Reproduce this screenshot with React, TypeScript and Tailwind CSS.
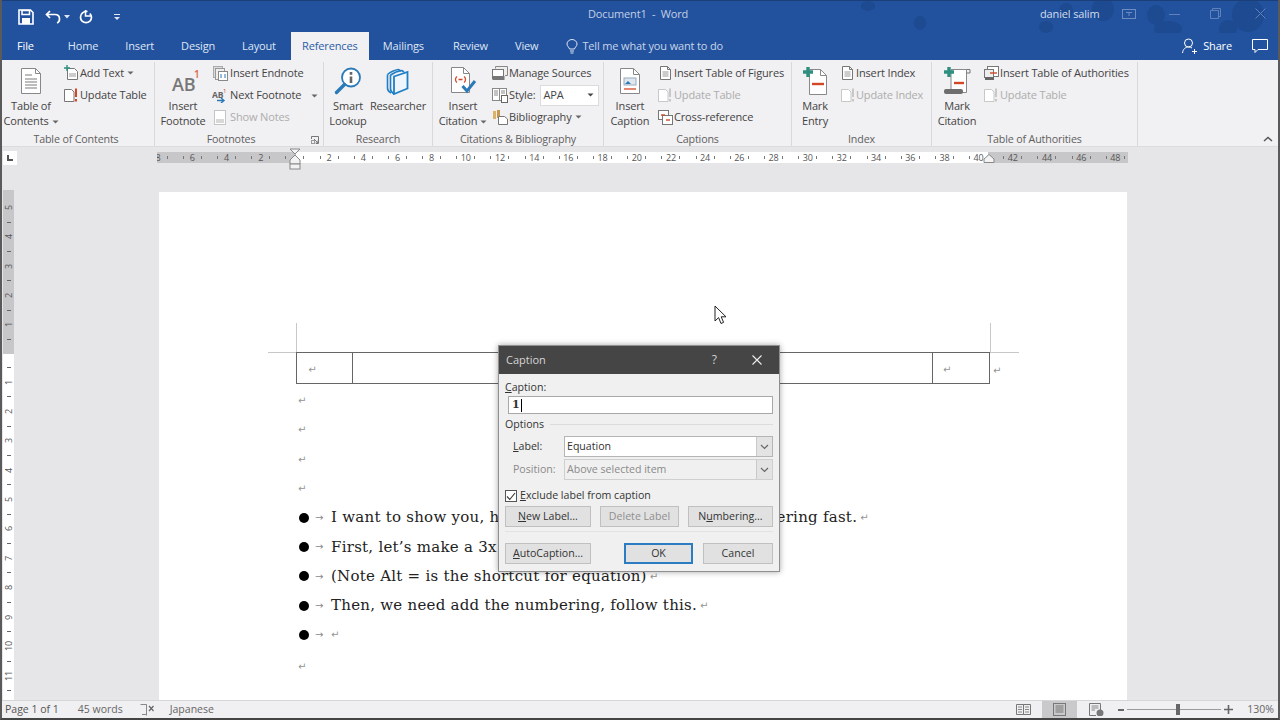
import React from "react";

const UI = "font-['Open_Sans','Noto_Sans',sans-serif]";

function Caret({ c = "#666" }: { c?: string }) {
  return (
    <svg width="7" height="4" viewBox="0 0 7 4" className="inline-block align-middle ml-[3px]">
      <path d="M0.5 0.5H6.5L3.5 3.5Z" fill={c} />
    </svg>
  );
}

const Doc = ({ d = false }: { d?: boolean }) => {
  const s = d ? "#c4c4c4" : "#777";
  return (
    <svg width="15" height="16" viewBox="0 0 15 16">
      <path d="M2.5 1.5H9.5L12.5 4.5V14.5H2.5Z" fill="#fff" stroke={s} />
      <path d="M9.5 1.5V4.5H12.5" fill="none" stroke={s} />
      {!d && <path d="M4.5 7H10.5M4.5 9H10.5M4.5 11H10.5" stroke="#999" />}
    </svg>
  );
};

const UpdateIcon = ({ d = false }: { d?: boolean }) => {
  const s = d ? "#c8c8c8" : "#777";
  return (
    <svg width="16" height="16" viewBox="0 0 16 16">
      <path d="M1.5 2.5H8.5L11 5V14.5H1.5Z" fill="#fff" stroke={s} />
      <path d="M13 1.5V10M13 12V14.5" stroke={d ? "#c8c8c8" : "#d24726"} strokeWidth="2" />
    </svg>
  );
};

const Small = ({
  icon,
  text,
  w = 18,
  d = false,
  after,
}: {
  icon: React.ReactNode;
  text: string;
  w?: number;
  d?: boolean;
  after?: React.ReactNode;
}) => (
  <div className={`flex h-[22px] items-center whitespace-nowrap ${d ? "text-[#adadad]" : "text-[#444]"}`}>
    <span className="flex shrink-0 items-center justify-center" style={{ width: w }}>
      {icon}
    </span>
    <span>{text}</span>
    {after}
  </div>
);

const Large = ({
  icon,
  lines,
  w,
  caret = false,
}: {
  icon: React.ReactNode;
  lines: string[];
  w: number;
  caret?: boolean;
}) => (
  <div className="flex shrink-0 flex-col items-center text-center" style={{ width: w }}>
    <div className="flex h-[37px] items-center justify-center">{icon}</div>
    <div className="whitespace-nowrap leading-[14.5px] text-[#444]">
      {lines.map((l, i) => (
        <div key={i}>
          {l}
          {caret && i === lines.length - 1 && <Caret />}
        </div>
      ))}
    </div>
  </div>
);

const Group = ({
  w,
  label,
  children,
  launcher = false,
  labelPad = 0,
}: {
  w: number;
  label: string;
  children: React.ReactNode;
  launcher?: boolean;
  labelPad?: number;
}) => (
  <div className="relative flex h-[84px] shrink-0 flex-col border-r border-[#d9d8da]" style={{ width: w }}>
    <div className="flex h-[70px] shrink-0">{children}</div>
    <div className="text-center text-[10.7px] leading-[14px] text-[#5f5f5f]" style={{ paddingRight: labelPad }}>
      {label}
    </div>
    {launcher && (
      <svg width="8" height="8" viewBox="0 0 8 8" className="absolute bottom-[2px] right-[4px]">
        <path d="M0.5 3V0.5H7.5V7.5H5M3 3L7 7M7 4.5V7H4.5" fill="none" stroke="#777" />
        <rect x="0.5" y="4.5" width="3" height="3" fill="none" stroke="#999" />
      </svg>
    )}
  </div>
);

const TocIcon = () => (
  <svg width="22" height="28" viewBox="0 0 22 28">
    <path d="M1.5 1.5H15.5L20.5 6.5V26.5H1.5Z" fill="#fff" stroke="#888" />
    <path d="M15.5 1.5V6.5H20.5" fill="none" stroke="#888" />
    <path d="M5 8H12M5 12H17M5 15H17M5 18H17M5 21H17" stroke="#7d7d7d" strokeWidth="1.2" />
  </svg>
);

const FootnoteIcon = () => (
  <svg width="34" height="28" viewBox="0 0 34 28">
    <text x="6" y="24" fontFamily="'Open Sans',sans-serif" fontSize="18" fontWeight="600" fill="#777">
      AB
    </text>
    <text x="28" y="11" fontFamily="'Open Sans',sans-serif" fontSize="10" fontWeight="600" fill="#d9694a">
      1
    </text>
  </svg>
);

const LookupIcon = () => (
  <svg width="28" height="28" viewBox="0 0 28 28">
    <circle cx="17" cy="10.5" r="9" fill="#fff" stroke="#2a79b8" strokeWidth="1.8" />
    <path d="M10.5 17.5L2.5 25.5" stroke="#2a79b8" strokeWidth="3.4" strokeLinecap="round" />
    <rect x="15.7" y="9.5" width="2.6" height="6.5" fill="#666" />
    <rect x="15.7" y="5" width="2.6" height="2.8" fill="#666" />
  </svg>
);

const ResearcherIcon = () => (
  <svg width="24" height="28" viewBox="0 0 24 28">
    <path d="M1.5 7.5C5 4.5 9 3 12.5 2.5L15 4" fill="none" stroke="#1f7fc4" strokeWidth="1.6" />
    <path d="M4.5 8C8 5.5 12 4 16 3.5L18 5" fill="none" stroke="#1f7fc4" strokeWidth="1.6" />
    <path d="M1.5 7.5V21C1.5 23 3 25 5 26" fill="none" stroke="#1f7fc4" strokeWidth="1.6" />
    <path d="M4.5 8V22C4.5 24 6 25.5 8 27" fill="none" stroke="#1f7fc4" strokeWidth="1.6" />
    <path d="M8 9.5L21.5 5V21.5L8 27Z" fill="#eef6fc" stroke="#1f7fc4" strokeWidth="1.8" />
  </svg>
);

const CitationIcon = () => (
  <svg width="28" height="30" viewBox="0 0 28 30">
    <path d="M2.5 1.5H14.5L20.5 7.5V26.5H2.5Z" fill="#fff" stroke="#888" />
    <path d="M14.5 1.5V7.5H20.5" fill="none" stroke="#888" />
    <path d="M8 10.5C6 12 6 15 8 16.5M15 10.5C17 12 17 15 15 16.5M9.5 13.5H13.5" fill="none" stroke="#d24726" strokeWidth="1.3" />
    <path d="M13.5 20L18 25L26 15" fill="none" stroke="#2a79b8" strokeWidth="3" />
  </svg>
);

const CaptionIcon = () => (
  <svg width="22" height="28" viewBox="0 0 22 28">
    <path d="M1.5 1.5H14.5L20.5 7.5V26.5H1.5Z" fill="#fff" stroke="#888" />
    <path d="M14.5 1.5V7.5H20.5" fill="none" stroke="#888" />
    <rect x="5" y="11" width="12" height="7" fill="#dfe7f0" stroke="#9aa9ba" />
    <path d="M6 17L9 14L12 17" fill="#2a79b8" />
    <path d="M5 22H17" stroke="#d24726" strokeWidth="1.3" />
  </svg>
);

const MarkEntryIcon = () => (
  <svg width="28" height="30" viewBox="0 0 28 30">
    <path d="M8.5 3.5H19.5L25.5 9.5V28.5H8.5Z" fill="#fff" stroke="#888" />
    <path d="M19.5 3.5V9.5H25.5" fill="none" stroke="#888" />
    <path d="M7 1V11M2 6H12" stroke="#2f8f7f" strokeWidth="3.4" />
    <path d="M11 18H23" stroke="#d24726" strokeWidth="2.4" />
  </svg>
);

const MarkCitationIcon = () => (
  <svg width="30" height="30" viewBox="0 0 30 30">
    <path d="M9 3.5H24.5V26.5H9Z" fill="#fff" stroke="#888" />
    <path d="M24.5 3.5H28V7H24.5" fill="none" stroke="#777" />
    <rect x="2" y="23" width="19" height="5" rx="2" fill="#6e6e6e" />
    <path d="M7 1V11M2 6H12" stroke="#2f8f7f" strokeWidth="3.4" />
    <path d="M12 17H22" stroke="#d24726" strokeWidth="2.4" />
  </svg>
);

const Stack = () => (
  <svg width="15" height="16" viewBox="0 0 15 16">
    <rect x="0.5" y="1.5" width="9" height="11" fill="#ddd" stroke="#aaa" />
    <rect x="2.5" y="3.5" width="9" height="11" fill="#eee" stroke="#999" />
    <rect x="5.5" y="6.5" width="9" height="9" fill="#fff" stroke="#888" />
    <path d="M8 9V13M12 9V13" stroke="#2a79b8" />
  </svg>
);

function Ret({ className = "" }: { className?: string }) {
  return <span className={`font-['DejaVu_Sans',sans-serif] text-[10px] text-[#949494] ${className}`}>↵</span>;
}

const Bullet = ({ children }: { children?: React.ReactNode }) => (
  <div className="flex h-[29.3px] items-center whitespace-nowrap">
    <span className="ml-[3px] h-[10px] w-[10px] shrink-0 rounded-full bg-black" />
    <span className="ml-[6px] w-[16px] shrink-0 font-['DejaVu_Sans',sans-serif] text-[10px] text-[#8a8a8a]">→</span>
    <span className="flex items-center">{children}</span>
  </div>
);

const Mark = ({ className = "" }: { className?: string }) => (
  <div className={`flex h-[29.3px] items-center pl-[2px] ${className}`}>
    <Ret />
  </div>
);

const hNums = [8, 6, 4, 2, 0, 2, 4, 6, 8, 10, 12, 14, 16, 18, 20, 22, 24, 26, 28, 30, 32, 34, 36, 38, 40, 42, 44, 46, 48];

const vTop = ["5", "", "4", "", "3", "", "2", "", "1", ""];
const vBottom = ["", "1", "", "2", "", "3", "", "4", "", "5", "", "6", "", "7", "", "8", "", "9", "", "10", "", "11", ""];

const VCell = ({ v }: { v: string }) => (
  <div className="flex h-[14.7px] shrink-0 items-center justify-center">
    {v ? (
      <span className="[writing-mode:vertical-rl] rotate-180 text-[9px] leading-[9px] text-[#555]">{v}</span>
    ) : (
      <span className="h-px w-[4px] bg-[#666]" />
    )}
  </div>
);

const Btn = ({
  children,
  w,
  d = false,
  primary = false,
}: {
  children: React.ReactNode;
  w: number;
  d?: boolean;
  primary?: boolean;
}) => (
  <div
    className={`flex h-[21px] items-center justify-center whitespace-nowrap bg-[#e1e1e1] ${
      primary ? "border-2 border-[#2b7cc0]" : "border border-[#c0c0c0]"
    } ${d ? "text-[#8f8f8f]" : "text-[#333]"}`}
    style={{ width: w }}
  >
    {children}
  </div>
);

const Select = ({ text, d = false }: { text: string; d?: boolean }) => (
  <div className={`flex h-[21px] w-[209px] border ${d ? "border-[#cfcfcf] bg-[#f0f0f0] text-[#8a8a8a]" : "border-[#b5b5b5] bg-white text-[#333]"}`}>
    <div className="flex flex-1 items-center pl-[2px]">{text}</div>
    <div className="flex w-[16px] items-center justify-center border-l border-[#c9c9c9] bg-[#e3e3e3]">
      <svg width="9" height="6" viewBox="0 0 9 6">
        <path d="M1 1L4.5 4.5L8 1" fill="none" stroke="#666" strokeWidth="1.2" />
      </svg>
    </div>
  </div>
);

export default function App() {
  return (
    <div className={`relative flex h-[720px] w-[1280px] flex-col overflow-hidden border-x-2 border-b-2 border-x-[#5a5a5a] border-b-[#444] bg-[#e6e5e8] text-[11px] tracking-[-0.15px] ${UI}`}>
      {/* Title bar */}
      <div className="relative flex h-[32px] shrink-0 items-center border-t border-[#1b3f78] bg-[#22529e] text-[#fff]">
        <svg className="absolute right-0 top-0" width="520" height="32" viewBox="0 0 520 32">
          <g fill="#1d4a90">
            <ellipse cx="398" cy="14" rx="9" ry="10" />
            <ellipse cx="162" cy="22" rx="6" ry="7" />
            <ellipse cx="110" cy="5" rx="7" ry="5" />
            <ellipse cx="288" cy="26" rx="7" ry="6" />
            <ellipse cx="345" cy="8" rx="11" ry="12" />
            <ellipse cx="410" cy="28" rx="14" ry="8" />
            <ellipse cx="470" cy="28" rx="9" ry="9" />
            <ellipse cx="490" cy="14" rx="16" ry="17" />
            <ellipse cx="308" cy="10" rx="7" ry="8" />
          </g>
        </svg>
        <svg width="16" height="16" viewBox="0 0 16 16" className="relative ml-[16px]">
          <path d="M1 1H12.5L15 3.5V15H1Z" fill="none" stroke="#fff" strokeWidth="1.6" />
          <path d="M4 1.5H11.5V5.5H4Z" fill="none" stroke="#fff" strokeWidth="1.5" />
          <rect x="4" y="9" width="8" height="6" fill="#fff" />
        </svg>
        <svg width="16" height="14" viewBox="0 0 16 14" className="relative ml-[11px]">
          <path d="M5 1L1.5 4.5L5 8M2 4.5H10C13 4.5 14.5 6.5 14.5 9C14.5 11 13.5 12.5 12 13" fill="none" stroke="#fff" strokeWidth="1.7" />
        </svg>
        <svg width="6" height="4" viewBox="0 0 6 4" className="relative ml-[3px]">
          <path d="M0 0H6L3 3.5Z" fill="#dfe6f2" />
        </svg>
        <svg width="14" height="14" viewBox="0 0 14 14" className="relative ml-[9px]">
          <path d="M8.5 1.5C4.5 1.2 1.5 3.8 1.5 7.2C1.5 10.4 4 12.7 7 12.7C10 12.7 12.5 10.4 12.5 7.3C12.5 5.7 11.8 4.5 10.8 3.5" fill="none" stroke="#fff" strokeWidth="1.7" />
          <path d="M6.5 0V6H12" fill="none" stroke="#fff" strokeWidth="1.5" />
        </svg>
        <svg width="6" height="6" viewBox="0 0 6 6" className="relative ml-[21px]">
          <path d="M0 0.5H6" stroke="#dfe6f2" />
          <path d="M0 3H6L3 6Z" fill="#dfe6f2" />
        </svg>
        <div className="absolute left-[586px] top-[5px] text-[#c3cfe4]">Document1&nbsp; -&nbsp; Word</div>
        <div className="absolute left-[1038px] top-[5px] text-[#d4dcec]">daniel salim</div>
        <svg width="14" height="10" viewBox="0 0 14 10" className="absolute left-[1120px] top-[8px]">
          <rect x="0.5" y="0.5" width="13" height="9" fill="none" stroke="#6c8cc2" />
          <path d="M4 3.5H10M7 3.5V7" stroke="#6c8cc2" />
        </svg>
        <div className="absolute left-[1167px] top-[13px] h-px w-[11px] bg-[#5f82bc]" />
        <svg width="11" height="11" viewBox="0 0 11 11" className="absolute left-[1208px] top-[7px]">
          <path d="M2.5 2.5V0.5H10.5V8.5H8.5M0.5 2.5H8.5V10.5H0.5Z" fill="none" stroke="#5f82bc" />
        </svg>
        <svg width="11" height="11" viewBox="0 0 11 11" className="absolute left-[1253px] top-[7px]">
          <path d="M0.5 0.5L10.5 10.5M10.5 0.5L0.5 10.5" stroke="#5f82bc" />
        </svg>
      </div>
      {/* Tabs */}
      <div className="flex h-[28px] shrink-0 items-center bg-[#22529e] text-[#dfe6f3]">
        <span className="ml-[15px] text-white">File</span>
        <span className="ml-[34px]">Home</span>
        <span className="ml-[27px]">Insert</span>
        <span className="ml-[27px]">Design</span>
        <span className="ml-[27px]">Layout</span>
        <span className="ml-[15px] flex h-[28px] w-[78px] items-center justify-center bg-[#f1f0f2] text-[#2b5ea8]">References</span>
        <span className="ml-[14px]">Mailings</span>
        <span className="ml-[29px]">Review</span>
        <span className="ml-[27px]">View</span>
        <svg width="12" height="15" viewBox="0 0 12 15" className="ml-[28px]">
          <path d="M3.5 10C3.5 8.5 1 7.5 1 5A5 4.5 0 0 1 11 5C11 7.5 8.5 8.5 8.5 10Z" fill="none" stroke="#dfe6f3" />
          <path d="M4 12H8M4.5 14H7.5" stroke="#dfe6f3" />
        </svg>
        <span className="ml-[4px] text-[#c9d5e8]">Tell me what you want to do</span>
        <div className="flex-1" />
        <svg width="15" height="16" viewBox="0 0 15 16" className="mr-[6px]">
          <circle cx="6.5" cy="5" r="4" fill="none" stroke="#fff" />
          <path d="M0.5 15C1 11 3.5 9 6.5 9C8 9 9 9.3 10 10M10 13.5H15M12.5 11V16" fill="none" stroke="#fff" />
        </svg>
        <span className="text-white">Share</span>
        <svg width="16" height="14" viewBox="0 0 16 14" className="ml-[20px] mr-[10px]">
          <path d="M0.5 0.5H15.5V10.5H6L3 13.5V10.5H0.5Z" fill="none" stroke="#fff" />
        </svg>
      </div>
      {/* Ribbon */}
      <div className="relative flex h-[86px] shrink-0 bg-[#f1f0f2] pt-[2px]">
        <Group w={153} label="Table of Contents" labelPad={4}>
          <Large w={58} lines={["Table of", "Contents"]} caret icon={<TocIcon />} />
          <div className="ml-[2px]">
            <Small
              icon={
                <svg width="15" height="16" viewBox="0 0 15 16">
                  <path d="M3.5 3.5H10.5L13.5 6.5V14.5H3.5Z" fill="#fff" stroke="#777" />
                  <path d="M5 9H12M5 11H12" stroke="#999" />
                  <path d="M3 0V6M0 3H6" stroke="#2f8f7f" strokeWidth="1.4" />
                </svg>
              }
              text="Add Text"
              after={<Caret />}
            />
            <Small icon={<UpdateIcon />} text="Update Table" />
          </div>
        </Group>
        <Group w={169} label="Footnotes" launcher labelPad={16}>
          <div className="ml-[5px]">
            <Large w={46} lines={["Insert", "Footnote"]} icon={<FootnoteIcon />} />
          </div>
          <div className="ml-[4px]">
            <Small w={20} icon={<Stack />} text="Insert Endnote" />
            <Small
              w={20}
              icon={
                <svg width="16" height="15" viewBox="0 0 16 15">
                  <text x="0" y="10" fontSize="8.5" fontWeight="700" fill="#666" fontFamily="'Open Sans',sans-serif">AB</text>
                  <text x="11" y="5" fontSize="6" fill="#d24726" fontFamily="'Open Sans',sans-serif">1</text>
                  <path d="M5 12.5H11M9 10L12 12.5L9 15" fill="none" stroke="#2a79b8" strokeWidth="1.4" />
                </svg>
              }
              text="Next Footnote"
              after={<span className="ml-[7px]"><Caret /></span>}
            />
            <Small
              w={20}
              d
              icon={
                <svg width="13" height="15" viewBox="0 0 13 15">
                  <rect x="0.5" y="0.5" width="11" height="14" fill="#fff" stroke="#c4c4c4" />
                  <rect x="2" y="9" width="8" height="4" fill="#d8d8d8" />
                </svg>
              }
              text="Show Notes"
            />
          </div>
        </Group>
        <Group w={109} label="Research">
          <div className="ml-[5px] flex">
            <Large w={38} lines={["Smart", "Lookup"]} icon={<LookupIcon />} />
            <div className="ml-[4px]">
              <Large w={54} lines={["Researcher"]} icon={<ResearcherIcon />} />
            </div>
          </div>
        </Group>
        <Group w={171} label="Citations & Bibliography">
          <div className="ml-[5px]">
            <Large w={50} lines={["Insert", "Citation"]} caret icon={<CitationIcon />} />
          </div>
          <div className="ml-[3px]">
            <Small
              icon={
                <svg width="16" height="15" viewBox="0 0 16 15">
                  <path d="M3.5 2.5V0.5H15.5V9.5H13" fill="#eee" stroke="#888" />
                  <rect x="0.5" y="3.5" width="11" height="9" fill="#fff" stroke="#777" />
                  <rect x="0.5" y="10" width="12" height="4" fill="#777" />
                </svg>
              }
              text="Manage Sources"
            />
            <div className="flex h-[22px] items-center whitespace-nowrap text-[#444]">
              <span className="flex w-[18px] items-center justify-center">
                <svg width="16" height="15" viewBox="0 0 16 15">
                  <rect x="0.5" y="0.5" width="7" height="12" fill="#fff" stroke="#888" />
                  <rect x="7.5" y="0.5" width="7" height="12" fill="#fff" stroke="#888" />
                  <path d="M2 3H6M2 5H6M2 7H6M9 3H13M9 5H13" stroke="#888" />
                  <rect x="9.5" y="7.5" width="6" height="7" fill="#fff" stroke="#666" />
                </svg>
              </span>
              <span>Style:</span>
              <div className="ml-[5px] flex h-[21px] w-[59px] items-center justify-between border border-[#dcdcdc] bg-white pl-[2px] pr-[4px]">
                APA
                <Caret c="#444" />
              </div>
            </div>
            <Small
              icon={
                <svg width="16" height="16" viewBox="0 0 16 16">
                  <rect x="1" y="2" width="3" height="8" fill="#d9b36a" />
                  <rect x="5" y="1" width="3" height="8" fill="#c9974b" />
                  <path d="M6.5 7.5H12.5L15.5 10V15.5H6.5Z" fill="#fff" stroke="#777" />
                </svg>
              }
              text="Bibliography"
              after={<Caret />}
            />
          </div>
        </Group>
        <Group w={188} label="Captions">
          <div className="ml-[6px]">
            <Large w={40} lines={["Insert", "Caption"]} icon={<CaptionIcon />} />
          </div>
          <div className="ml-[6px]">
            <Small icon={<Doc />} text="Insert Table of Figures" />
            <Small d icon={<UpdateIcon d />} text="Update Table" />
            <Small
              icon={
                <svg width="15" height="15" viewBox="0 0 15 15">
                  <rect x="0.5" y="0.5" width="10" height="9" fill="#fff" stroke="#777" />
                  <rect x="4.5" y="5.5" width="10" height="9" fill="#fff" stroke="#777" />
                  <path d="M3 5H7" stroke="#d24726" strokeWidth="1.4" />
                  <path d="M8 10H12" stroke="#d24726" strokeWidth="1.4" />
                </svg>
              }
              text="Cross-reference"
            />
          </div>
        </Group>
        <Group w={140} label="Index">
          <div className="ml-[7px]">
            <Large w={32} lines={["Mark", "Entry"]} icon={<MarkEntryIcon />} />
          </div>
          <div className="ml-[8px]">
            <Small icon={<Doc />} text="Insert Index" w={17} />
            <Small d icon={<UpdateIcon d />} text="Update Index" w={17} />
          </div>
        </Group>
        <Group w={206} label="Table of Authorities">
          <div className="ml-[4px]">
            <Large w={42} lines={["Mark", "Citation"]} icon={<MarkCitationIcon />} />
          </div>
          <div className="ml-[4px]">
            <Small
              icon={
                <svg width="15" height="15" viewBox="0 0 15 15">
                  <rect x="3.5" y="0.5" width="11" height="10" fill="#fff" stroke="#777" />
                  <rect x="0.5" y="3.5" width="9" height="8" fill="#eee" stroke="#777" />
                  <path d="M6 7H13" stroke="#d24726" strokeWidth="1.4" />
                  <rect x="1" y="11" width="9" height="3" fill="#666" />
                </svg>
              }
              text="Insert Table of Authorities"
            />
            <Small d icon={<UpdateIcon d />} text="Update Table" />
          </div>
        </Group>
        <svg width="10" height="6" viewBox="0 0 10 6" className="absolute bottom-[4px] right-[5px]">
          <path d="M1 5L5 1.5L9 5" fill="none" stroke="#555" strokeWidth="1.4" />
        </svg>
      </div>
      {/* Horizontal ruler row */}
      <div className="flex h-[22px] shrink-0 items-start border-t border-[#dcdbdd] bg-[#e6e5e8] pt-[4px]">
        <div className="ml-[1px] flex h-[14px] w-[14px] items-center justify-center bg-white">
          <span className="h-[6px] w-[6px] border-b-2 border-l-2 border-[#555]" />
        </div>
        <div className="relative ml-[140px] mt-[1px] h-[11px] w-[971px] overflow-hidden bg-[linear-gradient(90deg,#c7c6c8_139px,#fff_139px,#fff_831px,#c7c6c8_831px)]">
          <div className="ml-[-16px] flex h-full text-[9px] leading-[11px] text-[#555]">
            {hNums.map((n, i) => (
              <div key={i} className="flex w-[34.2px] shrink-0 items-center justify-center">
                <span className="h-[3px] w-px bg-[#777]" />
                <span className="w-[17px] text-center">{n === 0 ? "" : n}</span>
                <span className="h-[3px] w-px bg-[#777]" />
              </div>
            ))}
          </div>
        </div>
      </div>
      {/* Indent markers on ruler */}
      <svg width="12" height="22" viewBox="0 0 12 22" className="absolute left-[287px] top-[148px]">
        <path d="M1 1H11L6 6Z" fill="#f3f3f3" stroke="#888" />
        <path d="M6 7L11 12V16H1V12Z" fill="#f3f3f3" stroke="#888" />
        <rect x="1" y="16" width="10" height="5" fill="#f3f3f3" stroke="#888" />
      </svg>
      <svg width="12" height="9" viewBox="0 0 12 9" className="absolute left-[981px] top-[154px]">
        <path d="M6 0.5L11 5V8.5H1V5Z" fill="#f3f3f3" stroke="#888" />
      </svg>
      {/* Document area */}
      <div className="flex min-h-0 flex-1">
        <div className="ml-[1px] mt-[22px] w-[11px] shrink-0 self-stretch overflow-hidden">
          <div className="flex h-[164px] flex-col justify-end bg-[#c7c6c8] pb-[7px]">
            {vTop.map((v, i) => (
              <VCell key={i} v={v} />
            ))}
          </div>
          <div className="h-full bg-white pt-[6px]">
            {vBottom.map((v, i) => (
              <VCell key={i} v={v} />
            ))}
          </div>
        </div>
        <div className="relative ml-[145px] mt-[24px] w-[968px] overflow-hidden bg-white pl-[137px] font-['DejaVu_Serif',serif] text-[15px] tracking-[0.25px] text-[#222]">
          <div className="mt-[160px] flex h-[32px] w-[694px] border border-[#666]">
            <div className="flex w-[56px] items-center justify-center border-r border-[#666] pr-[24px] pt-[3px]">
              <Ret />
            </div>
            <div className="flex-1 border-r border-[#666]" />
            <div className="flex w-[56px] items-center pl-[10px] pt-[3px]">
              <Ret />
            </div>
          </div>
          <div className="mt-[1.8px]">
            <Mark />
            <Mark />
            <Mark />
            <Mark />
            <Bullet>
              I want to show you, how to make the equation and numbering fast.
              <Ret className="ml-[3px]" />
            </Bullet>
            <Bullet>First, let’s make a 3x1 table like this.</Bullet>
            <Bullet>
              (Note Alt = is the shortcut for equation)
              <Ret className="ml-[3px]" />
            </Bullet>
            <Bullet>
              Then, we need add the numbering, follow this.
              <Ret className="ml-[3px]" />
            </Bullet>
            <Bullet>
              <Ret />
            </Bullet>
            <Mark className="mt-[2px]" />
          </div>
          {/* Table crop marks */}
          <div className="absolute left-[137px] top-[131px] h-[29px] w-px bg-[#c8c8c8]" />
          <div className="absolute left-[831px] top-[131px] h-[29px] w-px bg-[#c8c8c8]" />
          <div className="absolute left-[109px] top-[160px] h-px w-[28px] bg-[#c8c8c8]" />
          <div className="absolute left-[831px] top-[160px] h-px w-[29px] bg-[#c8c8c8]" />
          <div className="absolute left-[834px] top-[170px] leading-none">
            <Ret />
          </div>
        </div>
      </div>
      {/* Status bar */}
      <div className="relative flex h-[18px] shrink-0 items-center border-t border-[#d6d5d7] bg-[#f0eff1] text-[10.5px] tracking-normal text-[#555]">
        <span className="ml-[3px]">Page 1 of 1</span>
        <span className="ml-[19px] text-[#666]">45 words</span>
        <svg width="15" height="13" viewBox="0 0 15 13" className="ml-[17px]">
          <path d="M0.5 1.5H6.5V11.5H2M6.5 1.5V12.5" fill="none" stroke="#888" />
          <path d="M9 3L13.5 8M13.5 3L9 8" stroke="#666" strokeWidth="1.2" />
        </svg>
        <span className="ml-[15px] text-[#666]">Japanese</span>
        <div className="flex-1" />
        <svg width="15" height="13" viewBox="0 0 15 13">
          <path d="M0.5 1.5H7.5V11.5H0.5ZM7.5 1.5H14.5V11.5H7.5Z" fill="none" stroke="#777" />
          <path d="M2 4H6M2 6.5H6M2 9H6M9 4H13M9 6.5H13M9 9H13" stroke="#888" />
        </svg>
        <div className="ml-[11px] flex h-[17px] w-[35px] items-center justify-center bg-[#c9c8ca]">
          <svg width="13" height="13" viewBox="0 0 13 13">
            <rect x="0.5" y="0.5" width="12" height="12" fill="none" stroke="#777" />
            <path d="M2.5 3H10.5M2.5 5H10.5M2.5 7H10.5M2.5 9H10.5" stroke="#777" />
          </svg>
        </div>
        <svg width="15" height="13" viewBox="0 0 15 13" className="ml-[12px]">
          <path d="M0.5 0.5H11.5V7M7 12.5H0.5V0.5" fill="none" stroke="#777" />
          <path d="M2.5 3H9.5M2.5 5H9.5M2.5 7H6" stroke="#888" />
          <circle cx="11" cy="10" r="3.5" fill="#777" />
        </svg>
        <span className="ml-[14px] h-[2px] w-[6px] bg-[#666]" />
        <div className="relative ml-[3px] flex h-[12px] w-[94px] items-center">
          <div className="h-px w-full bg-[#9a9a9a]" />
          <div className="absolute left-[49px] h-[11px] w-[4px] bg-[#666]" />
        </div>
        <svg width="9" height="9" viewBox="0 0 9 9" className="ml-[3px]">
          <path d="M0 4.5H9M4.5 0V9" stroke="#666" strokeWidth="1.6" />
        </svg>
        <span className="ml-[14px] mr-[4px] text-[#666]">130%</span>
      </div>
      {/* Caption dialog */}
      <div className="absolute left-[496px] top-[345px] flex h-[227px] w-[282px] flex-col border border-[#8f8f8f] bg-[#f0f0f0] text-[10.6px] tracking-normal text-[#333] shadow-[0_0_6px_rgba(0,0,0,0.35)]">
        <div className="flex h-[28px] shrink-0 items-center bg-[#454545] pl-[7px] text-[11px] text-[#d6d6d6]">
          <span>Caption</span>
          <div className="flex-1" />
          <span className="mr-[35px] text-[12px] text-[#cfcfcf]">?</span>
          <svg width="10" height="10" viewBox="0 0 10 10" className="mr-[17px]">
            <path d="M0.5 0.5L9.5 9.5M9.5 0.5L0.5 9.5" stroke="#eee" strokeWidth="1.1" />
          </svg>
        </div>
        <div className="flex flex-1 flex-col px-[6px]">
          <div className="mt-[6px] leading-[14px]">
            <u>C</u>aption:
          </div>
          <div className="ml-[3px] mt-[2px] flex h-[18px] w-[265px] items-center border border-[#a8a8a8] bg-white pl-[3px] font-['DejaVu_Serif',serif] text-[11px] font-bold">
            1<span className="ml-[1px] h-[13px] w-px bg-black" />
          </div>
          <div className="mt-[3px] flex items-center leading-[14px]">
            <span>Options</span>
            <div className="ml-[6px] h-px flex-1 bg-[#dcdcdc]" />
          </div>
          <div className="ml-[8px] mt-[5px] flex items-center">
            <span className="w-[51px]">
              <u>L</u>abel:
            </span>
            <Select text="Equation" />
          </div>
          <div className="ml-[8px] mt-[2px] flex items-center text-[#8a8a8a]">
            <span className="w-[51px]">Position:</span>
            <Select text="Above selected item" d />
          </div>
          <div className="mt-[9px] flex h-[14px] items-center">
            <span className="flex h-[12px] w-[12px] items-center justify-center border border-[#555] bg-white">
              <svg width="10" height="9" viewBox="0 0 10 9">
                <path d="M1 4.5L3.8 7.5L9 1" fill="none" stroke="#333" strokeWidth="1.1" />
              </svg>
            </span>
            <span className="ml-[3px]">
              <u>E</u>xclude label from caption
            </span>
          </div>
          <div className="mt-[3px] flex">
            <Btn w={87}>
              <span>
                <u>N</u>ew Label...
              </span>
            </Btn>
            <div className="ml-[9px]">
              <Btn w={79} d>
                Delete Label
              </Btn>
            </div>
            <div className="ml-[9px]">
              <Btn w={85}>
                <span>
                  N<u>u</u>mbering...
                </span>
              </Btn>
            </div>
          </div>
          <div className="mt-[4px] h-px bg-[#e2e2e2]" />
          <div className="mt-[11px] flex">
            <Btn w={87}>
              <span>
                <u>A</u>utoCaption...
              </span>
            </Btn>
            <div className="ml-[33px]">
              <Btn w={69} primary>
                OK
              </Btn>
            </div>
            <div className="ml-[10px]">
              <Btn w={70}>Cancel</Btn>
            </div>
          </div>
        </div>
      </div>
      {/* Mouse pointer */}
      <svg width="13" height="20" viewBox="0 0 13 20" className="absolute left-[712px] top-[305px]">
        <path d="M1 1V16L4.6 12.6L7 18.5L9.6 17.4L7.2 11.8H12Z" fill="#fff" stroke="#222" strokeWidth="1" />
      </svg>
    </div>
  );
}
